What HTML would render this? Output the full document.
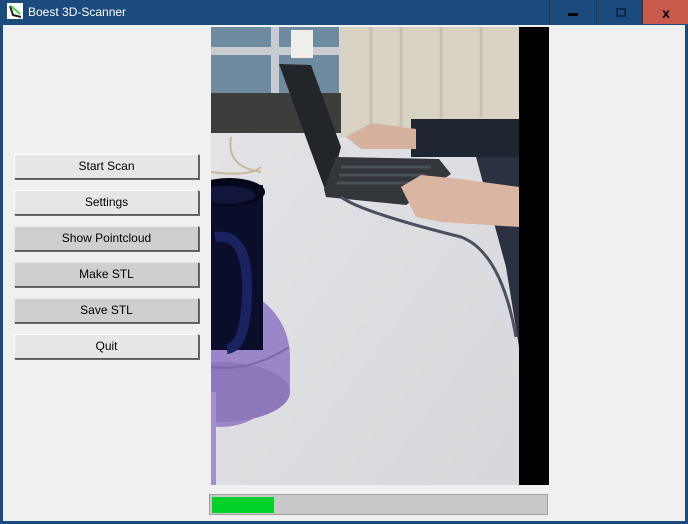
<!DOCTYPE html>
<html><head><style>
body{margin:0;width:688px;height:524px;overflow:hidden;background:#1b4a7c;font-family:"Liberation Sans",sans-serif;position:relative}
.title{position:absolute;left:0;top:0;width:688px;height:24px;background:#1b4a7c}
.t{position:absolute;left:28px;top:5px;color:#fff;font-size:12px}
.client{position:absolute;left:3px;top:25px;width:682px;height:496px;background:#f0f0f0}
.b{position:absolute;left:14px;width:183px;height:23px;border:1px solid #adadad;border-right-color:#5a5a5a;border-bottom-color:#5a5a5a;border-top-color:#fff;border-left-color:#fff;background:#e6e6e6;font-size:12px;text-align:center;line-height:23px;color:#000;box-shadow:1px 1px 0 #696969}
.g{background:#cfcfcf;border-top-color:#e8e8e8;border-left-color:#e8e8e8}
.cb{position:absolute;top:0;height:24px;width:46px}
</style></head><body>
<div class="title">
<svg style="position:absolute;left:7px;top:3px" width="16" height="16"><rect width="16" height="16" fill="#fff"/><path d="M3 3 L6 12 L14 14" stroke="#222" stroke-width="2" fill="none"/><path d="M4 3 L13 11" stroke="#4c4" stroke-width="2"/></svg>
<div class="t">Boest 3D-Scanner</div>
<div class="cb" style="left:549px;border-left:1px solid #333"><div style="position:absolute;left:18px;top:13px;width:10px;height:3px;background:#000"></div></div>
<div class="cb" style="left:596px;border-left:1px solid #333"><div style="position:absolute;left:19px;top:8px;width:6px;height:5px;border:2px solid #0d2a4a"></div></div>
<div class="cb" style="left:642px;background:#c75a4a;width:46px;border-left:1px solid #333;color:#000;font-weight:bold;font-size:14px;text-align:center;line-height:26px">x</div>
</div>
<div class="client"></div>
<div class="b" style="top:154px">Start Scan</div>
<div class="b" style="top:190px">Settings</div>
<div class="b g" style="top:226px">Show Pointcloud</div>
<div class="b g" style="top:262px">Make STL</div>
<div class="b g" style="top:298px">Save STL</div>
<div class="b" style="top:334px">Quit</div>
<svg style="position:absolute;left:211px;top:27px" width="338" height="458" viewBox="0 0 338 458">
<defs><linearGradient id="tb" x1="0" y1="0" x2="1" y2="1"><stop offset="0" stop-color="#e4e5e8"/><stop offset="1" stop-color="#d6d7da"/></linearGradient></defs>
<rect width="338" height="458" fill="url(#tb)"/>
<rect x="0" y="0" width="130" height="72" fill="#6f8ba0"/>
<rect x="0" y="20" width="130" height="8" fill="#c8ccd0"/>
<rect x="60" y="0" width="8" height="70" fill="#c8ccd0"/>
<rect x="80" y="3" width="22" height="28" fill="#eeeeea"/>
<rect x="128" y="0" width="180" height="110" fill="#d9d3c5"/>
<path d="M160 0 V100 M190 0 V100 M230 0 V95 M270 0 V90" stroke="#c8c0b0" stroke-width="3"/>
<rect x="0" y="66" width="130" height="40" fill="#3b3e3a"/>
<polygon points="265,130 308,130 308,320 295,240" fill="#2b3140"/>
<path d="M20 110 Q15 140 50 145 M0 145 Q40 150 50 140" stroke="#c8b89a" stroke-width="2" fill="none"/>
<polygon points="68,37 100,38 130,120 118,165 113,160" fill="#232629"/>
<polygon points="113,162 125,130 228,132 240,147 195,178 115,170" fill="#33363a"/>
<path d="M130 140 H220 M128 148 H215 M126 156 H200" stroke="#4a5058" stroke-width="3"/>
<rect x="200" y="92" width="108" height="38" fill="#1e2430"/>
<polygon points="135,110 160,96 205,102 205,122 150,122" fill="#d6b19e"/>
<polygon points="190,160 210,148 250,152 308,160 308,200 230,195 205,190" fill="#d9b5a2"/>
<path d="M130 170 Q150 185 250 210 Q290 225 305 310" stroke="#4a5060" stroke-width="3" fill="none"/>
<ellipse cx="10" cy="330" rx="69" ry="70" fill="#9a86c8"/>
<rect x="0" y="330" width="79" height="35" fill="#9a86c8"/>
<ellipse cx="10" cy="365" rx="69" ry="30" fill="#8d78bc"/>
<path d="M0 340 Q40 345 78 320" stroke="#7c68aa" stroke-width="2" fill="none"/>
<rect x="0" y="365" width="5" height="93" fill="#a090d0"/>
<rect x="0" y="158" width="52" height="165" fill="#0a0e2a"/>
<ellipse cx="18" cy="165" rx="36" ry="14" fill="#05081a"/>
<ellipse cx="16" cy="168" rx="28" ry="9" fill="#11163a"/>
<path d="M4 210 Q36 205 36 260 Q36 320 16 322" stroke="#1a2260" stroke-width="10" fill="none"/>
<rect x="308" y="0" width="30" height="458" fill="#000"/>
</svg>
<div style="position:absolute;left:209px;top:494px;width:337px;height:19px;border:1px solid #a0a0a0;background:#c9c9c9"></div>
<div style="position:absolute;left:212px;top:497px;width:62px;height:16px;background:#00d22a"></div>
</body></html>
